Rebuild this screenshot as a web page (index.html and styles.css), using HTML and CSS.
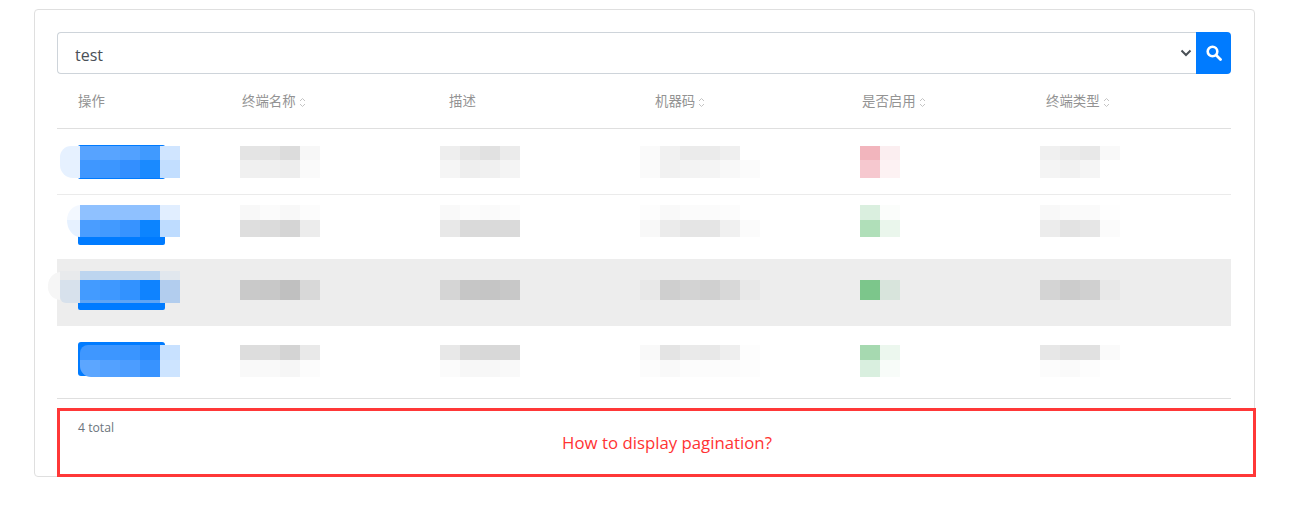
FILE: index.html
```html
<!DOCTYPE html>
<html lang="zh">
<head>
<meta charset="utf-8">
<title>终端列表</title>
<link rel="stylesheet" href="styles.css">
</head>
<body>
<div class="card">
  <form class="search">
    <div class="select-wrap">
      <select class="select"><option>test</option></select>
      <svg class="chevron" width="12" height="8" viewBox="0 0 12 8"><path d="M1.500 1.500 6 6l4.500-4.500" fill="none" stroke="#4a5056" stroke-width="2"/></svg>
    </div>
    <button class="search-btn" type="button" aria-label="搜索">
      <svg width="16" height="16" viewBox="0 0 16 16"><circle cx="6.500" cy="6.500" r="4.800" fill="none" stroke="#fff" stroke-width="2.600"/><path d="M10 10l4.500 4.500" stroke="#fff" stroke-width="2.800" stroke-linecap="round"/></svg>
    </button>
  </form>
  <table class="grid">
    <colgroup><col class="c1"><col class="c2"><col class="c3"><col class="c4"><col class="c5"><col class="c6"></colgroup>
    <thead>
      <tr>
        <th>操作</th>
        <th>终端名称<svg class="sort" width="7" height="11" viewBox="0 0 7 11"><path d="M1 4 3.500 1.500 6 4M1 7l2.500 2.500L6 7" fill="none" stroke="#c4c4c4" stroke-width="1"/></svg></th>
        <th>描述</th>
        <th>机器码<svg class="sort" width="7" height="11" viewBox="0 0 7 11"><path d="M1 4 3.500 1.500 6 4M1 7l2.500 2.500L6 7" fill="none" stroke="#c4c4c4" stroke-width="1"/></svg></th>
        <th>是否启用<svg class="sort" width="7" height="11" viewBox="0 0 7 11"><path d="M1 4 3.500 1.500 6 4M1 7l2.500 2.500L6 7" fill="none" stroke="#c4c4c4" stroke-width="1"/></svg></th>
        <th>终端类型<svg class="sort" width="7" height="11" viewBox="0 0 7 11"><path d="M1 4 3.500 1.500 6 4M1 7l2.500 2.500L6 7" fill="none" stroke="#c4c4c4" stroke-width="1"/></svg></th>
      </tr>
    </thead>
    <tbody>
      <tr>
        <td><svg class="m m1" width="140" height="65"><rect x="30" y="16" width="87" height="34" rx="2" fill="#007bff"/><path d="M32 17h-9a11 11 0 0 0-11 11v8a13 13 0 0 0 13 13h7z" fill="#e6f1ff"/><rect x="32" y="17" width="20" height="14" fill="#57a3ff"/><rect x="52" y="17" width="20" height="14" fill="#58a4ff"/><rect x="72" y="17" width="20" height="14" fill="#52a1ff"/><rect x="92" y="17" width="20" height="14" fill="#409aff" /><rect x="32" y="31" width="20" height="18" fill="#3f97ff"/><rect x="52" y="31" width="20" height="18" fill="#3c96ff"/><rect x="72" y="31" width="20" height="18" fill="#338fff"/><rect x="92" y="31" width="20" height="18" fill="#1a8aff"/><rect x="112" y="17" width="20" height="14" fill="#d0e5ff"/><rect x="112" y="31" width="20" height="18" fill="#c2deff"/></svg></td>
        <td><svg class="m m2" width="80" height="65"><rect width="20" height="14" y="17" fill="#e4e4e4"/><rect x="20" width="20" height="14" y="17" fill="#e3e3e3"/><rect x="40" width="20" height="14" y="17" fill="#dcdcdc"/><rect x="60" width="20" height="14" y="17" fill="#f7f7f7"/><rect width="20" height="18" y="31" fill="#f0f0f0"/><rect x="20" width="20" height="18" y="31" fill="#efefef"/><rect x="40" width="20" height="18" y="31" fill="#ededed"/><rect x="60" width="20" height="18" y="31" fill="#fafafa"/></svg></td>
        <td><svg class="m m3" width="80" height="65"><rect width="20" height="14" y="17" fill="#eeeeee"/><rect x="20" width="20" height="14" y="17" fill="#e6e6e6"/><rect x="40" width="20" height="14" y="17" fill="#e1e1e1"/><rect x="60" width="20" height="14" y="17" fill="#ebebeb"/><rect width="20" height="18" y="31" fill="#f5f5f5"/><rect x="20" width="20" height="18" y="31" fill="#eeeeee"/><rect x="40" width="20" height="18" y="31" fill="#f0f0f0"/><rect x="60" width="20" height="18" y="31" fill="#f4f4f4"/></svg></td>
        <td><svg class="m m4" width="120" height="65"><rect width="20" height="14" y="17" fill="#fafafa"/><rect x="20" width="20" height="14" y="17" fill="#f1f1f1"/><rect x="40" width="40" height="14" y="17" fill="#ebebeb"/><rect x="80" width="20" height="14" y="17" fill="#efefef"/><rect width="20" height="18" y="31" fill="#fafafa"/><rect x="20" width="20" height="18" y="31" fill="#f1f1f1"/><rect x="40" width="20" height="18" y="31" fill="#f3f3f3"/><rect x="60" width="20" height="18" y="31" fill="#f4f4f4"/><rect x="80" width="20" height="18" y="31" fill="#f8f8f8"/><rect x="100" width="20" height="18" y="31" fill="#fbfbfb"/></svg></td>
        <td><svg class="m m5" width="40" height="65"><rect width="20" height="14" y="17" fill="#f2b5bd"/><rect x="20" width="20" height="14" y="17" fill="#fbeef0"/><rect width="20" height="18" y="31" fill="#f6c8cf"/><rect x="20" width="20" height="18" y="31" fill="#fdf2f3"/></svg></td>
        <td><svg class="m m6" width="80" height="65"><rect width="20" height="14" y="17" fill="#f0f0f0"/><rect x="20" width="20" height="14" y="17" fill="#ebebeb"/><rect x="40" width="20" height="14" y="17" fill="#e8e8e8"/><rect x="60" width="20" height="14" y="17" fill="#f9f9f9"/><rect width="20" height="18" y="31" fill="#f4f4f4"/><rect x="20" width="20" height="18" y="31" fill="#f1f1f1"/><rect x="40" width="20" height="18" y="31" fill="#f5f5f5"/></svg></td>
      </tr>
      <tr>
        <td><svg class="m m1" width="140" height="64"><rect x="30" y="30" width="87" height="20" rx="2" fill="#007bff"/><path d="M32 10a14 15 0 0 0-13 15h13z" fill="#f3f8ff"/><path d="M32 25H19a13 17 0 0 0 13 17z" fill="#e6f1ff"/><rect x="32" y="10" width="80" height="15" fill="#8fc1ff"/><rect x="32" y="25" width="20" height="17" fill="#4a9dff"/><rect x="52" y="25" width="20" height="17" fill="#429aff"/><rect x="72" y="25" width="20" height="17" fill="#3793ff"/><rect x="92" y="25" width="20" height="17" fill="#0c84ff"/><rect x="112" y="10" width="20" height="15" fill="#e1eeff"/><rect x="112" y="25" width="20" height="17" fill="#bedcff"/></svg></td>
        <td><svg class="m m2" width="80" height="64"><rect width="20" height="15" y="10" fill="#f8f8f8"/><rect x="20" width="20" height="15" y="10" fill="#fbfbfb"/><rect x="40" width="20" height="15" y="10" fill="#f8f8f8"/><rect x="60" width="20" height="15" y="10" fill="#fcfcfc"/><rect width="20" height="17" y="25" fill="#dedede"/><rect x="20" width="20" height="17" y="25" fill="#dbdbdb"/><rect x="40" width="20" height="17" y="25" fill="#d5d5d5"/><rect x="60" width="20" height="17" y="25" fill="#ececec"/></svg></td>
        <td><svg class="m m3" width="80" height="64"><rect width="20" height="15" y="10" fill="#f9f9f9"/><rect x="20" width="20" height="15" y="10" fill="#fcfcfc"/><rect x="40" width="20" height="15" y="10" fill="#fafafa"/><rect x="60" width="20" height="15" y="10" fill="#fcfcfc"/><rect width="20" height="17" y="25" fill="#e8e8e8"/><rect x="20" width="60" height="17" y="25" fill="#dadada"/></svg></td>
        <td><svg class="m m4" width="120" height="64"><rect width="20" height="15" y="10" fill="#fdfdfd"/><rect x="20" width="20" height="15" y="10" fill="#f9f9f9"/><rect x="40" width="40" height="15" y="10" fill="#fbfbfb"/><rect x="80" width="20" height="15" y="10" fill="#fcfcfc"/><rect width="20" height="17" y="25" fill="#f8f8f8"/><rect x="20" width="20" height="17" y="25" fill="#ebebeb"/><rect x="40" width="40" height="17" y="25" fill="#e5e5e5"/><rect x="80" width="20" height="17" y="25" fill="#f0f0f0"/><rect x="100" width="20" height="17" y="25" fill="#fbfbfb"/></svg></td>
        <td><svg class="m m5" width="40" height="64"><rect width="20" height="15" y="10" fill="#daefdf"/><rect x="20" width="20" height="15" y="10" fill="#fbfdfb"/><rect width="20" height="17" y="25" fill="#b0dfb9"/><rect x="20" width="20" height="17" y="25" fill="#eaf6ec"/></svg></td>
        <td><svg class="m m6" width="80" height="64"><rect width="20" height="15" y="10" fill="#f8f8f8"/><rect x="20" width="40" height="15" y="10" fill="#fafafa"/><rect x="60" width="20" height="15" y="10" fill="#fefefe"/><rect width="20" height="17" y="25" fill="#ececec"/><rect x="20" width="20" height="17" y="25" fill="#e3e3e3"/><rect x="40" width="20" height="17" y="25" fill="#e6e6e6"/><rect x="60" width="20" height="17" y="25" fill="#fbfbfb"/></svg></td>
      </tr>
      <tr class="hover">
        <td><svg class="m m1" width="140" height="67"><rect x="30" y="35" width="87" height="16" rx="2" fill="#007bff"/><path d="M12 13a13 14 0 0 0-12 13 13 13 0 0 0 12 15z" fill="#f6f6f6"/><rect x="12" y="12" width="20" height="9" fill="#e8eaec"/><path d="M12 21h20v23H18a6 6 0 0 1-6-6z" fill="#d7e1ec"/><rect x="32" y="12" width="80" height="9" fill="#bdd5ef"/><rect x="32" y="21" width="20" height="20" fill="#439bff"/><rect x="52" y="21" width="20" height="20" fill="#3e98ff"/><rect x="72" y="21" width="20" height="20" fill="#3292ff"/><rect x="92" y="21" width="20" height="20" fill="#0f83ff"/><rect x="112" y="12" width="20" height="9" fill="#e1e7ee"/><rect x="112" y="21" width="20" height="23" fill="#b2cdee"/><rect x="32" y="41" width="80" height="3" fill="#5ea4f4"/></svg></td>
        <td><svg class="m m2" width="80" height="67"><rect width="20" height="20" y="21" fill="#c9c9c9"/><rect x="20" width="20" height="20" y="21" fill="#c8c8c8"/><rect x="40" width="20" height="20" y="21" fill="#c0c0c0"/><rect x="60" width="20" height="20" y="21" fill="#d8d8d8"/></svg></td>
        <td><svg class="m m3" width="80" height="67"><rect width="20" height="20" y="21" fill="#d5d5d5"/><rect x="20" width="20" height="20" y="21" fill="#c6c6c6"/><rect x="40" width="20" height="20" y="21" fill="#c5c5c5"/><rect x="60" width="20" height="20" y="21" fill="#c8c8c8"/></svg></td>
        <td><svg class="m m4" width="120" height="67"><rect width="20" height="20" y="21" fill="#e8e8e8"/><rect x="20" width="20" height="20" y="21" fill="#cfcfcf"/><rect x="40" width="20" height="20" y="21" fill="#d3d3d3"/><rect x="60" width="20" height="20" y="21" fill="#d0d0d0"/><rect x="80" width="20" height="20" y="21" fill="#d8d8d8"/><rect x="100" width="20" height="20" y="21" fill="#e8e8e8"/></svg></td>
        <td><svg class="m m5" width="40" height="67"><rect width="20" height="20" y="21" fill="#7cc68b"/><rect x="20" width="20" height="20" y="21" fill="#d8e4dc"/></svg></td>
        <td><svg class="m m6" width="80" height="67"><rect width="20" height="20" y="21" fill="#d4d4d4"/><rect x="20" width="20" height="20" y="21" fill="#cccccc"/><rect x="40" width="20" height="20" y="21" fill="#d0d0d0"/><rect x="60" width="20" height="20" y="21" fill="#e8e8e8"/></svg></td>
      </tr>
      <tr>
        <td><svg class="m m1" width="140" height="72"><rect x="30" y="16" width="87" height="34" rx="3" fill="#007bff"/><path d="M52 19H40a8 8 0 0 0-8 8v7h20z" fill="#3f97ff"/><path d="M52 34H32v6a11 11 0 0 0 11 11h9z" fill="#5ca6ff"/><rect x="52" y="19" width="20" height="15" fill="#3d96ff"/><rect x="72" y="19" width="20" height="15" fill="#3a95ff"/><rect x="92" y="19" width="20" height="15" fill="#2a8cff"/><rect x="52" y="34" width="20" height="17" fill="#53a1ff"/><rect x="72" y="34" width="20" height="17" fill="#4c9dff"/><rect x="92" y="34" width="20" height="17" fill="#3893ff"/><rect x="112" y="19" width="20" height="15" fill="#c8e1ff"/><rect x="112" y="34" width="20" height="17" fill="#cde4ff"/></svg></td>
        <td><svg class="m m2" width="80" height="72"><rect width="40" height="15" y="19" fill="#dddddd"/><rect x="40" width="20" height="15" y="19" fill="#d4d4d4"/><rect x="60" width="20" height="15" y="19" fill="#e9e9e9"/><rect width="40" height="17" y="34" fill="#f9f9f9"/><rect x="40" width="20" height="17" y="34" fill="#f6f6f6"/><rect x="60" width="20" height="17" y="34" fill="#fcfcfc"/></svg></td>
        <td><svg class="m m3" width="80" height="72"><rect width="20" height="15" y="19" fill="#e8e8e8"/><rect x="20" width="20" height="15" y="19" fill="#dadada"/><rect x="40" width="40" height="15" y="19" fill="#d8d8d8"/><rect width="20" height="17" y="34" fill="#fbfbfb"/><rect x="20" width="40" height="17" y="34" fill="#f7f7f7"/><rect x="60" width="20" height="17" y="34" fill="#f9f9f9"/></svg></td>
        <td><svg class="m m4" width="120" height="72"><rect width="20" height="15" y="19" fill="#f9f9f9"/><rect x="20" width="20" height="15" y="19" fill="#e4e4e4"/><rect x="40" width="20" height="15" y="19" fill="#eaeaea"/><rect x="60" width="20" height="15" y="19" fill="#e8e8e8"/><rect x="80" width="20" height="15" y="19" fill="#eeeeee"/><rect x="100" width="20" height="15" y="19" fill="#fdfdfd"/><rect width="20" height="17" y="34" fill="#fcfcfc"/><rect x="20" width="20" height="17" y="34" fill="#f9f9f9"/><rect x="40" width="60" height="17" y="34" fill="#fcfcfc"/><rect x="100" width="20" height="17" y="34" fill="#fdfdfd"/></svg></td>
        <td><svg class="m m5" width="40" height="72"><rect width="20" height="15" y="19" fill="#a6d9b0"/><rect x="20" width="20" height="15" y="19" fill="#ecf7ee"/><rect width="20" height="17" y="34" fill="#d9efdf"/><rect x="20" width="20" height="17" y="34" fill="#f8fcf9"/></svg></td>
        <td><svg class="m m6" width="80" height="72"><rect width="20" height="15" y="19" fill="#e7e7e7"/><rect x="20" width="40" height="15" y="19" fill="#e1e1e1"/><rect x="60" width="20" height="15" y="19" fill="#fafafa"/><rect width="20" height="17" y="34" fill="#fcfcfc"/><rect x="20" width="20" height="17" y="34" fill="#fafafa"/><rect x="40" width="20" height="17" y="34" fill="#fdfdfd"/></svg></td>
      </tr>
    </tbody>
  </table>
  <div class="foot">4 total</div>
  <div class="note">How to display pagination?</div>
</div>
</body>
</html>
```
FILE: styles.css
```css
* { box-sizing: border-box; }
html, body { margin: 0; background: #fff; }
body { padding: 9px 36px 0 34px; font-family: "Open Sans", "Noto Sans CJK SC", sans-serif; }

.card {
  position: relative;
  height: 468px;
  padding: 22px 23px 0 22px;
  background: #fff;
  border: 1px solid #dfdfdf;
  border-radius: 4px;
}

.search { display: flex; height: 42px; }
.select-wrap { position: relative; flex: 1; }
.select {
  display: block;
  width: 100%;
  height: 42px;
  padding: 4px 30px 0 17px;
  font: 16px "Open Sans", sans-serif;
  color: #495057;
  background: #fff;
  border: 1px solid #ced4da;
  border-right: 0;
  border-radius: 4px 0 0 4px;
  appearance: none;
  -webkit-appearance: none;
  outline: 0;
}
.chevron { position: absolute; right: 4px; top: 17px; }
.search-btn {
  display: flex;
  align-items: center;
  justify-content: center;
  width: 35px;
  padding: 0;
  background: #007bff;
  border: 0;
  border-radius: 0 4px 4px 0;
}

.grid { width: 1174px; table-layout: fixed; border-collapse: collapse; }
.c1 { width: 164px; }
.c2 { width: 207px; }
.c3 { width: 206px; }
.c4 { width: 207px; }
.c5 { width: 184px; }
.c6 { width: 206px; }

.grid th {
  height: 54px;
  padding: 0 0 2px 21px;
  font: 400 13.4px "Noto Sans CJK SC", sans-serif;
  color: #939393;
  text-align: left;
  border-bottom: 1px solid #dfdfdf;
}
.sort { margin-left: 3px; vertical-align: -2px; }

.grid td { padding: 0; vertical-align: top; border-bottom: 1px solid #ebebeb; }
.grid tbody tr:nth-child(2) td,
.grid tr.hover td { border-bottom: 0; }
.grid tbody tr:last-child td { border-bottom: 1px solid #dfdfdf; }
.hover { background: #ededed; }

.m { display: block; overflow: visible; }
.m1 { margin-left: -9px; }
.m2 { margin-left: 19px; }
.m3 { margin-left: 12px; }
.m4 { margin-left: 6px; }
.m5 { margin-left: 19px; }
.m6 { margin-left: 15px; }

.foot {
  padding: 21px 0 0 21px;
  font-size: 12.2px;
  line-height: 16px;
  color: #6c757d;
}
.note {
  position: absolute;
  left: 22px;
  right: -2px;
  top: 398px;
  height: 69px;
  display: flex;
  align-items: center;
  justify-content: center;
  padding-left: 21px;
  font-size: 16.8px;
  color: #ff3333;
  border: 3px solid #ff3838;
}
```
